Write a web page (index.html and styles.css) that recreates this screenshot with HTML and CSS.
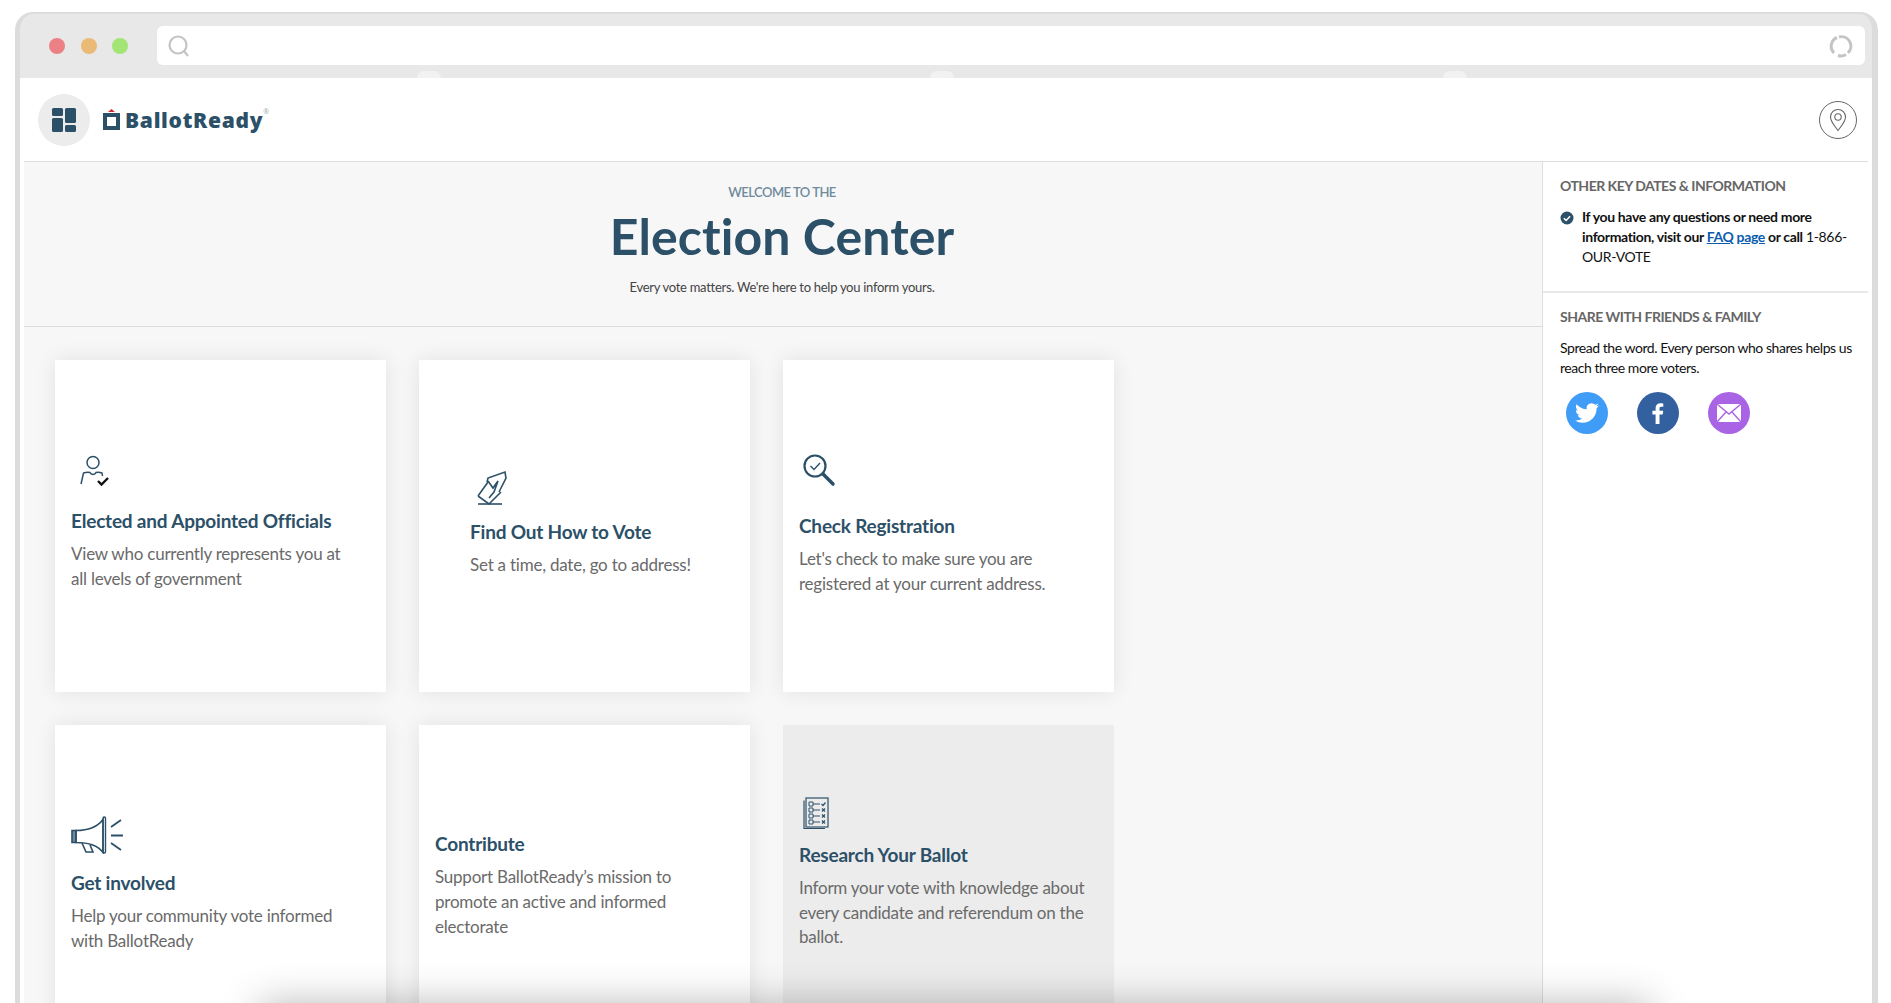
FILE: index.html
```html
<!DOCTYPE html>
<html lang="en">
<head>
    <meta charset="UTF-8">
    <meta name="viewport" content="width=device-width, initial-scale=1.0">
    <title>Election Center</title>
    <link rel="stylesheet" href="styles.css">
</head>
<body>
    <div class="window">
        <!-- browser chrome -->
        <div class="chrome">
            <div class="dots">
                <span class="dot dot-red"></span>
                <span class="dot dot-orange"></span>
                <span class="dot dot-green"></span>
            </div>
            <div class="address-bar">
                <svg width="24" height="24" viewBox="0 0 24 24" fill="none" stroke="#c4c4c4" stroke-width="2.200">
                    <circle cx="11" cy="11" r="8.500"/>
                    <path d="M17 17l4 5"/>
                </svg>
                <svg width="24" height="24" viewBox="0 0 24 24" fill="none" stroke="#c4c4c4" stroke-width="3">
                    <path d="M5 19a9.500 9.500 0 0 1 3-15.500M10 3a9.500 9.500 0 0 1 9 16M17 20.500a9.500 9.500 0 0 1-8 1"/>
                </svg>
            </div>
            <span class="tab-bump tab-bump-1"></span>
            <span class="tab-bump tab-bump-2"></span>
            <span class="tab-bump tab-bump-3"></span>
        </div>

        <div class="app">
            <header class="topbar">
                <div class="brand">
                    <div class="menu-circle">
                        <svg width="26" height="26" viewBox="0 0 26 26" fill="#2c5068">
                            <rect x="1" y="1" width="11" height="8" rx="1.500"/>
                            <rect x="1" y="11" width="11" height="14" rx="1.500"/>
                            <rect x="14" y="1" width="11" height="15" rx="1.500"/>
                            <rect x="14" y="18" width="11" height="7" rx="1.500"/>
                        </svg>
                    </div>
                    <svg class="logo-mark" width="17" height="22" viewBox="0 0 17 22">
                        <path d="M8.500 0l3.500 3h-7z" fill="#d8262c"/>
                        <path fill="#2c5068" fill-rule="evenodd" d="M0 4h17v17H0zM4 8v9h9V8z"/>
                    </svg>
                    <span class="logo-text">BallotReady<sup class="logo-reg">®</sup></span>
                </div>
                <button class="pin-btn">
                    <svg width="20" height="24" viewBox="0 0 20 24" fill="none" stroke="#666" stroke-width="1.100">
                        <path d="M10 22.500C6 17 2.500 13.500 2.500 9a7.500 7.500 0 0 1 15 0c0 4.500-3.500 8-7.500 13.500z"/>
                        <circle cx="10" cy="9" r="3.200"/>
                    </svg>
                </button>
            </header>

            <div class="body-row">
                <main class="main">
                    <section class="hero">
                        <div class="hero-kicker">WELCOME TO THE</div>
                        <h1>Election Center</h1>
                        <p>Every vote matters. We're here to help you inform yours.</p>
                    </section>

                    <div class="cards">
                        <div class="card card-officials">
                            <svg class="card-icon" width="32" height="32" viewBox="0 0 32 32" fill="none" stroke="#2c5068" stroke-width="1.500">
                                <circle cx="14" cy="7.500" r="6"/>
                                <path d="M2 29l2.500-11c3-1 5-1 6.500-.5 1 2.500 5 2.500 6 0 2-.5 4-.2 6 .5l.5 3"/>
                                <path d="M19 26l3.500 3.500L29 23" stroke="#111" stroke-width="2.400"/>
                            </svg>
                            <h3>Elected and Appointed Officials</h3>
                            <p>View who currently represents you at all levels of government</p>
                        </div>

                        <div class="card card-inset">
                            <svg class="card-icon" width="34" height="38" viewBox="0 0 34 38" fill="none" stroke="#2c5068" stroke-width="1.600">
                                <path d="M2 34h24"/>
                                <path d="M2 26l11 8 12-12M2 26l10-14"/>
                                <path d="M11 12l1-4 17-6 1 6-7 14"/>
                                <path d="M12 11l5 7 5-7-4 11-5 6"/>
                            </svg>
                            <h3>Find Out How to Vote</h3>
                            <p>Set a time, date, go to address!</p>
                        </div>

                        <div class="card card-check">
                            <svg class="card-icon" width="34" height="34" viewBox="0 0 34 34" fill="none" stroke="#2c5068" stroke-width="2.200">
                                <circle cx="13" cy="13" r="10.500"/>
                                <path d="M8.500 13l3.500 3.500 6-6.500" stroke-width="1.400"/>
                                <path d="M21 21l10 10" stroke-width="3.500" stroke-linecap="round"/>
                            </svg>
                            <h3>Check Registration</h3>
                            <p>Let's check to make sure you are registered at your current address.</p>
                        </div>

                        <div class="card card-involved">
                            <svg class="card-icon" width="52" height="38" viewBox="0 0 52 38" fill="none" stroke="#2c5068" stroke-width="1.600">
                                <path d="M1 14.500h4v12H1z" fill="#6f8a9c"/>
                                <path d="M5 14.500c12 0 21-3 27-11v33c-5-7-15-10-27-10z"/>
                                <rect x="32" y="1" width="2.500" height="36" rx="1.200" stroke-width="1.400"/>
                                <path d="M11 27l4 9h7l-3-7"/>
                                <path d="M40 11l10-7M40 19.500h12M40 27l10 7" stroke-width="1.800"/>
                            </svg>
                            <h3>Get involved</h3>
                            <p>Help your community vote informed with BallotReady</p>
                        </div>

                        <div class="card card-contribute">
                            <h3>Contribute</h3>
                            <p>Support BallotReady’s mission to promote an active and informed electorate</p>
                        </div>

                        <div class="card card-muted">
                            <svg class="card-icon" width="26" height="32" viewBox="0 0 26 32" fill="none" stroke="#2c5068" stroke-width="1">
                                <rect x="3" y="1" width="22" height="29" fill="#ececec" stroke-width="1.200"/>
                                <path d="M1 3.500V31.500H22" stroke-width="1.200"/>
                                <path d="M6 5h4v4H6zM6 11h4v4H6zM6 17h4v4H6zM6 23h4v4H6z"/>
                                <path d="M10 7h7M10 13h7M10 19h7M10 25h7"/>
                                <path d="M18.500 7l1.500 1.500 2.500-3M19 11.500l3 3M22 11.500l-3 3M19 17.500l3 3M22 17.500l-3 3M19 23.500l3 3M22 23.500l-3 3" stroke-width="1.200"/>
                            </svg>
                            <h3>Research Your Ballot</h3>
                            <p>Inform your vote with knowledge about every candidate and referendum on the ballot.</p>
                        </div>
                    </div>
                </main>

                <aside class="sidebar">
                    <section class="side-block side-info">
                        <h4>OTHER KEY DATES &amp; INFORMATION</h4>
                        <div class="info-item">
                            <svg class="info-check" width="14" height="14" viewBox="0 0 14 14">
                                <circle cx="7" cy="7" r="6.500" fill="#2c5068"/>
                                <path d="M3.800 7.200l2.300 2.200 4-4.200" fill="none" stroke="#fff" stroke-width="1.500"/>
                            </svg>
                            <p><b>If you have any questions or need more information, visit our <a href="#">FAQ</a> <a href="#">page</a> or call</b> 1-866-OUR-VOTE</p>
                        </div>
                    </section>
                    <section class="side-block">
                        <h4>SHARE WITH FRIENDS &amp; FAMILY</h4>
                        <p class="share-text">Spread the word. Every person who shares helps us reach three more voters.</p>
                        <div class="share-row">
                            <span class="share share-tw">
                                <svg width="24" height="24" viewBox="0 0 24 24" fill="#fff"><path d="M23.950 4.570a10 10 0 0 1-2.820.770 4.960 4.960 0 0 0 2.160-2.720c-.950.550-2 .950-3.130 1.180a4.920 4.920 0 0 0-8.380 4.480C7.690 8.100 4.070 6.130 1.640 3.160a4.820 4.820 0 0 0-.67 2.480c0 1.710.87 3.210 2.190 4.100a4.900 4.900 0 0 1-2.230-.62v.06a4.920 4.920 0 0 0 3.950 4.830 5 5 0 0 1-2.210.08 4.940 4.940 0 0 0 4.600 3.420A9.870 9.870 0 0 1 0 19.540a14 14 0 0 0 7.560 2.210c9.050 0 14-7.500 14-13.980 0-.21 0-.42-.02-.63a9.940 9.940 0 0 0 2.410-2.570z"/></svg>
                            </span>
                            <span class="share share-fb">
                                <svg width="24" height="24" viewBox="0 0 24 24" fill="#fff"><path d="M13.500 23V13.500h3.200l.5-3.700h-3.700V7.500c0-1.100.3-1.800 1.800-1.800h2V2.400c-.4 0-1.500-.2-2.900-.2-2.800 0-4.800 1.700-4.800 4.900v2.700H6.400v3.700h3.200V23z"/></svg>
                            </span>
                            <span class="share share-mail">
                                <svg width="26" height="20" viewBox="0 0 26 20" fill="none" stroke="#fff" stroke-width="1.400">
                                    <rect x="1" y="1" width="24" height="18" fill="#fff" stroke="none"/>
                                    <path d="M1 1l12 10L25 1M1 19l9-10M25 19l-9-10" stroke="#a864e4"/>
                                </svg>
                            </span>
                        </div>
                    </section>
                </aside>
            </div>
        </div>
    </div>
    <div class="bottom-shade"></div>
</body>
</html>
```

FILE: styles.css
```css
* {
    margin: 0;
    padding: 0;
    box-sizing: border-box;
}

html, body {
    height: 100%;
    overflow: hidden;
}

body {
    font-family: 'Lato', 'Liberation Sans', sans-serif;
    background: white;
    position: relative;
    padding: 12px 13px 0 15px;
}

.window {
    height: 991px;
    border-radius: 18px 18px 0 0;
    background: #e8e8e8;
    border: solid #dcdcdc;
    border-width: 2px 6px 0 5px;
    display: flex;
    flex-direction: column;
    overflow: hidden;
}

/* browser chrome */
.chrome {
    height: 64px;
    flex: none;
    padding: 12px 7px 13px 0;
    display: flex;
    align-items: stretch;
    position: relative;
}

.dots {
    width: 137px;
    flex: none;
    display: flex;
    align-items: center;
    gap: 15.500px;
    padding-left: 29px;
}

.dot {
    width: 16px;
    height: 16px;
    border-radius: 50%;
}

.dot-red { background: #ec8185; }
.dot-orange { background: #ebba76; }
.dot-green { background: #a2e574; }

.address-bar {
    flex: 1;
    background: white;
    border-radius: 6px;
    display: flex;
    align-items: center;
    justify-content: space-between;
    padding: 0 12px 0 10px;
}

.tab-bump {
    position: absolute;
    bottom: 0;
    width: 24px;
    height: 7px;
    background: #f2f2f2;
    border-radius: 8px 8px 0 0;
}

.tab-bump-1 { left: 397px; }
.tab-bump-2 { left: 910px; }
.tab-bump-3 { left: 1423px; }

/* app */
.app {
    flex: 1;
    background: white;
    display: flex;
    flex-direction: column;
    min-height: 0;
    padding-right: 4px;
}

.topbar {
    height: 84px;
    flex: none;
    margin-left: 4px;
    border-bottom: 1px solid #dedede;
    display: flex;
    align-items: center;
    justify-content: space-between;
    padding: 0 11px 0 14px;
}

.brand {
    display: flex;
    align-items: center;
}

.menu-circle {
    width: 52px;
    height: 52px;
    border-radius: 50%;
    background: #ececec;
    display: flex;
    align-items: center;
    justify-content: center;
    margin-right: 13px;
}

.logo-mark {
    margin-right: 5px;
}

.logo-text {
    font-family: 'Open Sans', 'Lato', sans-serif;
    font-size: 21px;
    font-weight: 800;
    color: #2c5068;
    letter-spacing: 0.7px;
}

.logo-reg {
    font-size: 7px;
    font-weight: 400;
    color: #9aa;
    vertical-align: 14px;
    line-height: 0;
}

.pin-btn {
    width: 38px;
    height: 38px;
    border: 1px solid #666;
    border-radius: 50%;
    background: white;
    display: flex;
    align-items: center;
    justify-content: center;
}

.body-row {
    flex: 1;
    display: flex;
    min-height: 0;
    margin-left: 4px;
}

.main {
    flex: 1;
    background: #f7f7f7;
    border-right: 1px solid #dedede;
    min-width: 0;
}

.hero {
    height: 165px;
    border-bottom: 1px solid #dcdcdc;
    text-align: center;
    padding: 21px 2px 0 0;
}

.hero-kicker {
    font-size: 13px;
    font-weight: 600;
    line-height: 18px;
    letter-spacing: -0.5px;
    color: #6f8a9c;
}

.hero h1 {
    font-size: 50px;
    font-weight: 700;
    line-height: 60px;
    letter-spacing: 0.1px;
    font-variant-ligatures: none;
    color: #2c5068;
    margin-top: 5px;
}

.hero p {
    font-size: 13px;
    line-height: 18px;
    letter-spacing: -0.28px;
    color: #444;
    margin-top: 12px;
}

.cards {
    display: grid;
    grid-template-columns: repeat(3, 331px);
    grid-auto-rows: 332px;
    gap: 33px;
    padding: 33px 0 0 31px;
}

.card {
    background: white;
    box-shadow: 0 0 20px rgba(0,0,0,0.09);
    padding: 0 16px;
    display: flex;
    flex-direction: column;
    justify-content: center;
    align-items: flex-start;
}

.card-icon {
    margin: 0 0 14px 6px;
}

/* each card sits a bit differently around its icon */
.card-officials { padding-bottom: 5px; }
.card-officials .card-icon { margin: 0 0 20px 8px; }

.card-inset {
    padding: 0 16px 5px 51px;
}
.card-inset .card-icon { margin: 0 0 10px 6px; }

.card-check { padding-bottom: 3px; }
.card-check .card-icon { margin: 0 0 25px 3px; }

.card-involved { padding-bottom: 13px; }
.card-involved .card-icon { margin: 0 0 15px 0; }

.card-contribute { padding-bottom: 12px; }

.card-muted {
    background: #ececec;
    box-shadow: none;
    padding-bottom: 35px;
}
.card-muted .card-icon { margin: 0 0 12px 4px; }

.card h3 {
    font-size: 19px;
    font-weight: 700;
    line-height: 28px;
    letter-spacing: -0.2px;
    color: #2c5068;
    margin-bottom: 7px;
}

.card p {
    font-size: 17px;
    line-height: 24.7px;
    letter-spacing: -0.23px;
    color: #6a6a6a;
    max-width: 288px;
}

.sidebar {
    width: 325px;
    flex: none;
    background: white;
}

.side-block {
    padding: 15px 8px 0 17px;
    font-size: 14px;
    line-height: 20px;
    letter-spacing: -0.35px;
    color: #111;
}

.side-info {
    height: 131px;
    padding-right: 12px;
    border-bottom: 2px solid #e8e8e8;
}

.side-block h4 {
    font-size: 14px;
    font-weight: 700;
    line-height: 18px;
    letter-spacing: -0.5px;
    color: #666;
    margin-bottom: 12px;
}

.share-text {
    letter-spacing: -0.45px;
}

.info-item {
    display: flex;
    gap: 8px;
}

.info-check {
    flex: none;
    margin-top: 4px;
}

.info-item a {
    color: #0b5cad;
}

.share-row {
    display: flex;
    gap: 29px;
    margin: 14px 0 0 6px;
}

.share {
    width: 42px;
    height: 42px;
    border-radius: 50%;
    display: flex;
    align-items: center;
    justify-content: center;
}

.share-tw { background: #3f9cf7; }
.share-fb { background: #33609f; }
.share-mail { background: #a864e4; }

/* soft shadow of the device mockup, sits over everything */
.bottom-shade {
    position: absolute;
    left: 270px;
    top: 1015px;
    width: 1370px;
    height: 40px;
    box-shadow: 0 0 40px 10px rgba(0,0,0,0.3);
    pointer-events: none;
}
```
